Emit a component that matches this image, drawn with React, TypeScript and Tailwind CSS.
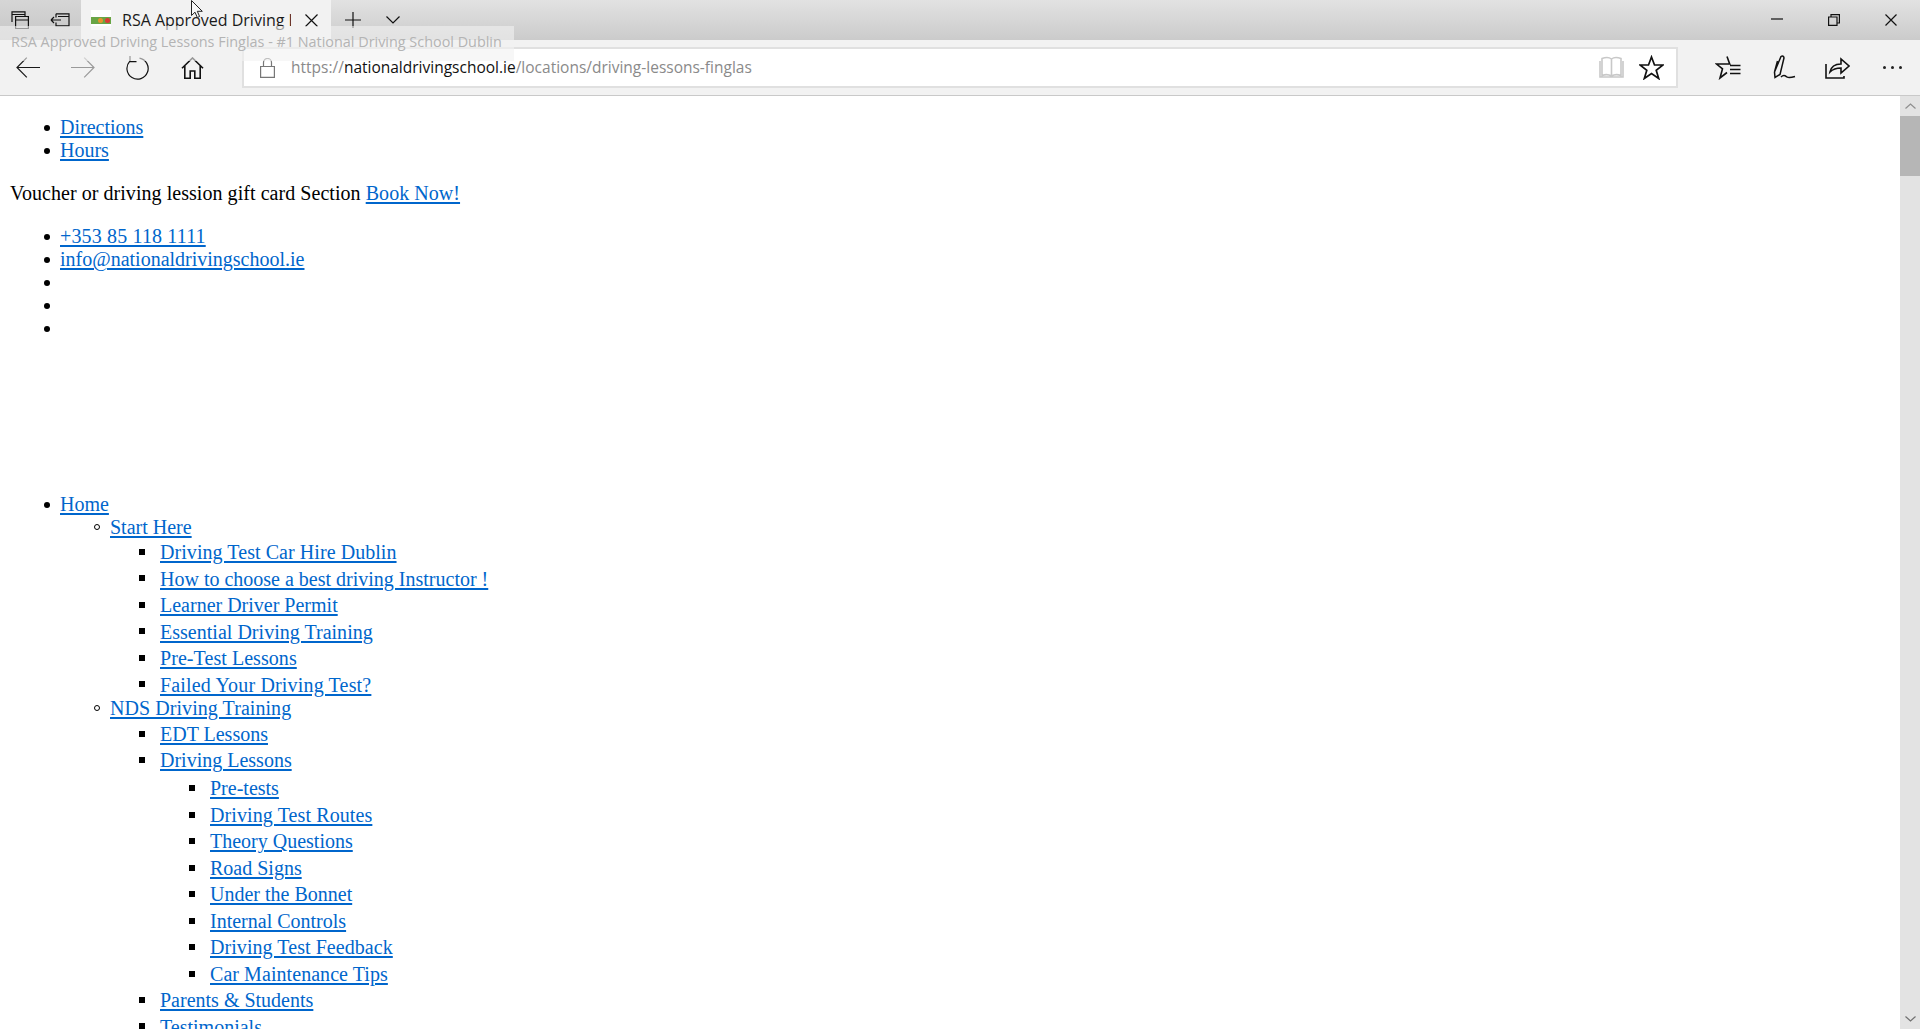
const serif = 'font-["Liberation_Serif",serif]';

const linkClass = 'text-[#0066cc] underline decoration-[#0066cc] underline-offset-[2px]';

// list markers are drawn by hand, the browser's own come out bigger and closer to the text
const discItem = "relative list-none before:absolute before:top-[8.5px] before:left-[-16.5px] before:h-[6px] before:w-[6px] before:rounded-full before:bg-black";
const circleItem = "relative list-none before:absolute before:top-[8px] before:left-[-16.500px] before:h-[6px] before:w-[6px] before:rounded-full before:border before:border-black";
const squareItem = "relative list-none before:absolute before:top-[10px] before:left-[-21px] before:h-[6px] before:w-[6px] before:bg-black";

function Link({ children, className = '' }: { children: string; className?: string }) {
  return <a href="#" className={`${linkClass} ${className}`}>{children}</a>;
}

function Sub({ children, className = '' }: { children: string; className?: string }) {
  return (
    <li className={`pt-[2.2px] pb-[1.3px] last:pb-0 ${squareItem}`}>
      <Link className={className}>{children}</Link>
    </li>
  );
}

function Icon({ w, h, children, className = '' }: { w: number; h: number; children: React.ReactNode; className?: string }) {
  return (
    <svg width={w} height={h} viewBox={`0 0 ${w} ${h}`} fill="none" stroke="currentColor" strokeWidth="1.2" className={className}>
      {children}
    </svg>
  );
}

function TitleBar() {
  return (
    <div className="flex h-[40px] items-stretch bg-gradient-to-b from-[#e2e2e2] to-[#cbcbcb] text-[#111]">
      <div className="flex w-[81px] items-center bg-gradient-to-b from-[#d6d6d6] to-[#c6c6c6] pl-[11px]">
        <Icon w={18} h={18}>
          <path d="M1 11V.8h13V5M1 3.500h13M4.600 5.500h12.800v12H4.600zM4.600 9h12.800" />
        </Icon>
        <Icon w={20} h={14} className="ml-[21px]">
          <path d="M6 .8h13v12H6V9.500M6 4.500V.8M1 7h10M1 7l3-3M1 7l3 3M8 3.500h11" />
        </Icon>
      </div>
      <div className="flex w-[250px] items-center bg-[#f2f2f2] pl-[10px]">
        <div className="flex h-[20px] w-[20px] items-center bg-white">
          <div className="flex h-[7px] w-full items-center justify-end gap-[2px] bg-[#69a545] pr-[1px]">
            <div className="h-[5px] w-[5px] rounded-full bg-[#e8942c]" />
            <div className="h-[5px] w-[5px] rounded-full bg-[#dc3a35]" />
          </div>
        </div>
        <div className="ml-[11px] w-[169px] overflow-hidden font-['Open_Sans',sans-serif] text-[16px] whitespace-nowrap text-[#1a1a1a]">
          RSA Approved Driving Lessons
        </div>
        <Icon w={13} h={13} className="ml-[14px]">
          <path d="M.5.5l12 12M12.500.5l-12 12" />
        </Icon>
      </div>
      <div className="flex items-center pl-[14px]">
        <Icon w={16} h={16}>
          <path d="M8 0v16M0 8h16" />
        </Icon>
        <Icon w={14} h={8} className="ml-[25px]">
          <path d="M.5.5L7 7 13.500.5" />
        </Icon>
      </div>
      <div className="ml-auto flex items-center pr-[23px]">
        <Icon w={12} h={2} className="mb-[3px]">
          <path d="M0 1h12" />
        </Icon>
        <Icon w={12} h={12} className="ml-[45px]">
          <path d="M.6 3h8.400v8.400H.6zM3 3V.6h8.400V9H9" />
        </Icon>
        <Icon w={12} h={12} className="ml-[45px]">
          <path d="M.5.5l11 11M11.500.5l-11 11" />
        </Icon>
      </div>
    </div>
  );
}

function Toolbar() {
  return (
    <div className="flex h-[56px] items-center border-b border-[#c9c9c9] bg-[#f2f2f2] text-[#111]">
      <div className="flex w-[242px] items-center pl-[16px]">
        <Icon w={24} h={21} className="text-[#1a1a1a]">
          <path d="M1 10.500h23M10.800.6L1 10.500l9.800 9.900" />
        </Icon>
        <Icon w={24} h={21} className="ml-[31px] text-[#9a9a9a]">
          <path d="M0 10.500h23M13.200.6L23 10.500l-9.800 9.900" />
        </Icon>
        <Icon w={23} h={24} className="ml-[31px]">
          <path d="M13.500 2.100A10.600 10.600 0 1 1 3.700 5.400M4 0v5.600h6.500" />
        </Icon>
        <Icon w={23} h={22} className="ml-[32px]">
          <path strokeWidth="1.600" d="M1 11.300L11.500 1 22 11.300M3.800 8.600v12.600h5.400v-7.200h4.600v7.200h5.400V8.600" />
        </Icon>
      </div>
      <div className="flex h-[41px] w-[1436px] items-center border-2 border-[#e0e0e0] bg-white pr-[12px] pl-[16px]">
        <Icon w={15} h={20} className="text-[#777]">
          <path d="M.6 8.500h13.800v10.900H.6zM3.500 8.500V4.400a4 4 0 0 1 8 0v4.100" />
        </Icon>
        <div className="ml-[16px] pt-[1px] font-['Open_Sans',sans-serif] text-[15.5px] whitespace-nowrap text-[#8a8a8a]">
          https://<span className="text-[#111]">nationaldrivingschool.ie</span>/locations/driving-lessons-finglas
        </div>
        <Icon w={25} h={23} className="ml-auto text-[#c8c8c8]">
          <path strokeWidth="1.600" d="M3 2.500c4-1.500 7-1.500 9.500.5 2.500-2 5.500-2 9.500-.5v17c-4-1.500-7-1-9.500.5-2.500-1.500-5.500-2-9.500-.5zM12.500 3v17M1 5v16h23V5" />
        </Icon>
        <Icon w={25} h={25} className="ml-[15px]">
          <path strokeWidth="1.700" d="M12.500 2l3 8h8.500l-6.800 5.200 2.500 8.300-7.200-5-7.200 5 2.500-8.300L1 10h8.500z" />
        </Icon>
      </div>
      <div className="flex items-center pl-[37px]">
        <Icon w={26} h={25}>
          <path strokeWidth="1.600" d="M12 1.500l2.700 7.500H1.500l6 4.800L5 23l7-5.500M15 10.500h10.500M15 14.500h10.500M15 18.500h10.500" />
        </Icon>
        <Icon w={24} h={25} className="ml-[31px]">
          <path strokeWidth="1.500" d="M9 1.500c1.500-1 3-.2 3 1.500L8 19.500 3 22.500l-.5-5.500zM5.500 6L2.500 17M9 22c3-3 4.500-1 6 0s3 1 8-.5" />
        </Icon>
        <Icon w={25} h={23} className="ml-[29px]">
          <path strokeWidth="1.600" d="M1 8v14h18v-2M1 22h18M5 16c1-5 5-8 11-8V3l8 7-8 7v-5c-5 0-8 1-11 4z" />
        </Icon>
        <div className="ml-[33px] flex gap-[5px]">
          <div className="h-[3px] w-[3px] rounded-full bg-[#222]" />
          <div className="h-[3px] w-[3px] rounded-full bg-[#222]" />
          <div className="h-[3px] w-[3px] rounded-full bg-[#222]" />
        </div>
      </div>
    </div>
  );
}

function PageContent() {
  return (
    <div className={`flex-1 overflow-hidden bg-white pt-[20px] pl-[10px] text-[20px] leading-[23px] text-black ${serif}`}>
      <ul className="pl-[50px]">
        <li className={discItem}><Link>Directions</Link></li>
        <li className={discItem}><Link>Hours</Link></li>
      </ul>
      <p className="my-[20px] tracking-[0.05px]">
        Voucher or driving lession gift card Section <Link>Book Now!</Link>
      </p>
      <ul className="pl-[50px]">
        <li className={discItem}><Link className="tracking-[0.15px]">+353 85 118 1111</Link></li>
        <li className={discItem}><Link>info@nationaldrivingschool.ie</Link></li>
        <li className={`h-[23px] ${discItem}`} />
        <li className={`h-[23px] ${discItem}`} />
        <li className={`h-[23px] ${discItem}`} />
      </ul>
      <ul className="mt-[153px] pl-[50px]">
        <li className={discItem}>
          <Link>Home</Link>
          <ul className="pl-[50px]">
            <li className={circleItem}>
              <Link>Start Here</Link>
              <ul className="pl-[50px]">
                <Sub className="tracking-[0.06px]">Driving Test Car Hire Dublin</Sub>
                <Sub>How to choose a best driving Instructor !</Sub>
                <Sub>Learner Driver Permit</Sub>
                <Sub className="tracking-[0.02px]">Essential Driving Training</Sub>
                <Sub className="tracking-[0.06px]">Pre-Test Lessons</Sub>
                <Sub className="tracking-[0.17px]">Failed Your Driving Test?</Sub>
              </ul>
            </li>
            <li className={circleItem}>
              <Link className="tracking-[0.06px]">NDS Driving Training</Link>
              <ul className="mt-[1px] pl-[50px]">
                <Sub>EDT Lessons</Sub>
                <li className={`pt-[2.2px] ${squareItem}`}>
                  <Link>Driving Lessons</Link>
                  <ul className="mt-[3px] mb-[1px] pl-[50px]">
                    <Sub>Pre-tests</Sub>
                    <Sub className="tracking-[0.1px]">Driving Test Routes</Sub>
                    <Sub>Theory Questions</Sub>
                    <Sub>Road Signs</Sub>
                    <Sub>Under the Bonnet</Sub>
                    <Sub>Internal Controls</Sub>
                    <Sub className="tracking-[0.06px]">Driving Test Feedback</Sub>
                    <Sub className="tracking-[0.06px]">Car Maintenance Tips</Sub>
                  </ul>
                </li>
                <Sub>Parents &amp; Students</Sub>
                <Sub>Testimonials</Sub>
              </ul>
            </li>
          </ul>
        </li>
      </ul>
    </div>
  );
}

function Scrollbar() {
  return (
    <div className="flex w-[20px] flex-col bg-[#e3e3e3]">
      <div className="flex h-[20px] items-center justify-center">
        <svg width="11" height="6" viewBox="0 0 11 6" fill="none" stroke="#8f8f8f" strokeWidth="1.200">
          <path d="M.5 5.500l5-4.500 5 4.500" />
        </svg>
      </div>
      <div className="h-[60px] bg-[#b6b6b6]" />
      <div className="mt-auto flex h-[20px] items-center justify-center">
        <svg width="11" height="6" viewBox="0 0 11 6" fill="none" stroke="#707070" strokeWidth="1.200">
          <path d="M.5.5l5 4.500 5-4.500" />
        </svg>
      </div>
    </div>
  );
}

export default function App() {
  return (
    <div className="relative flex h-[1029px] w-[1920px] flex-col overflow-hidden">
      <TitleBar />
      <Toolbar />
      <div className="flex min-h-0 flex-1">
        <PageContent />
        <Scrollbar />
      </div>
      {/* fading tab tooltip */}
      <div className="absolute top-[26px] left-0 h-[35px] w-[514px] bg-[#f2f2f2]/60 pt-[6px] pl-[11px] font-['Open_Sans',sans-serif] text-[14.4px] leading-[20px] whitespace-nowrap text-[#b4b4b4]">
        RSA Approved Driving Lessons Finglas - #1 National Driving School Dublin
      </div>
      {/* mouse cursor */}
      <svg width="12" height="19" viewBox="0 0 12 19" className="absolute top-0 left-[191px]">
        <path d="M.5.5v15l3.500-3.300 2.300 5.300 2.300-1-2.300-5.200h5z" fill="#f8f8f8" stroke="#222" strokeWidth="1" />
      </svg>
    </div>
  );
}
